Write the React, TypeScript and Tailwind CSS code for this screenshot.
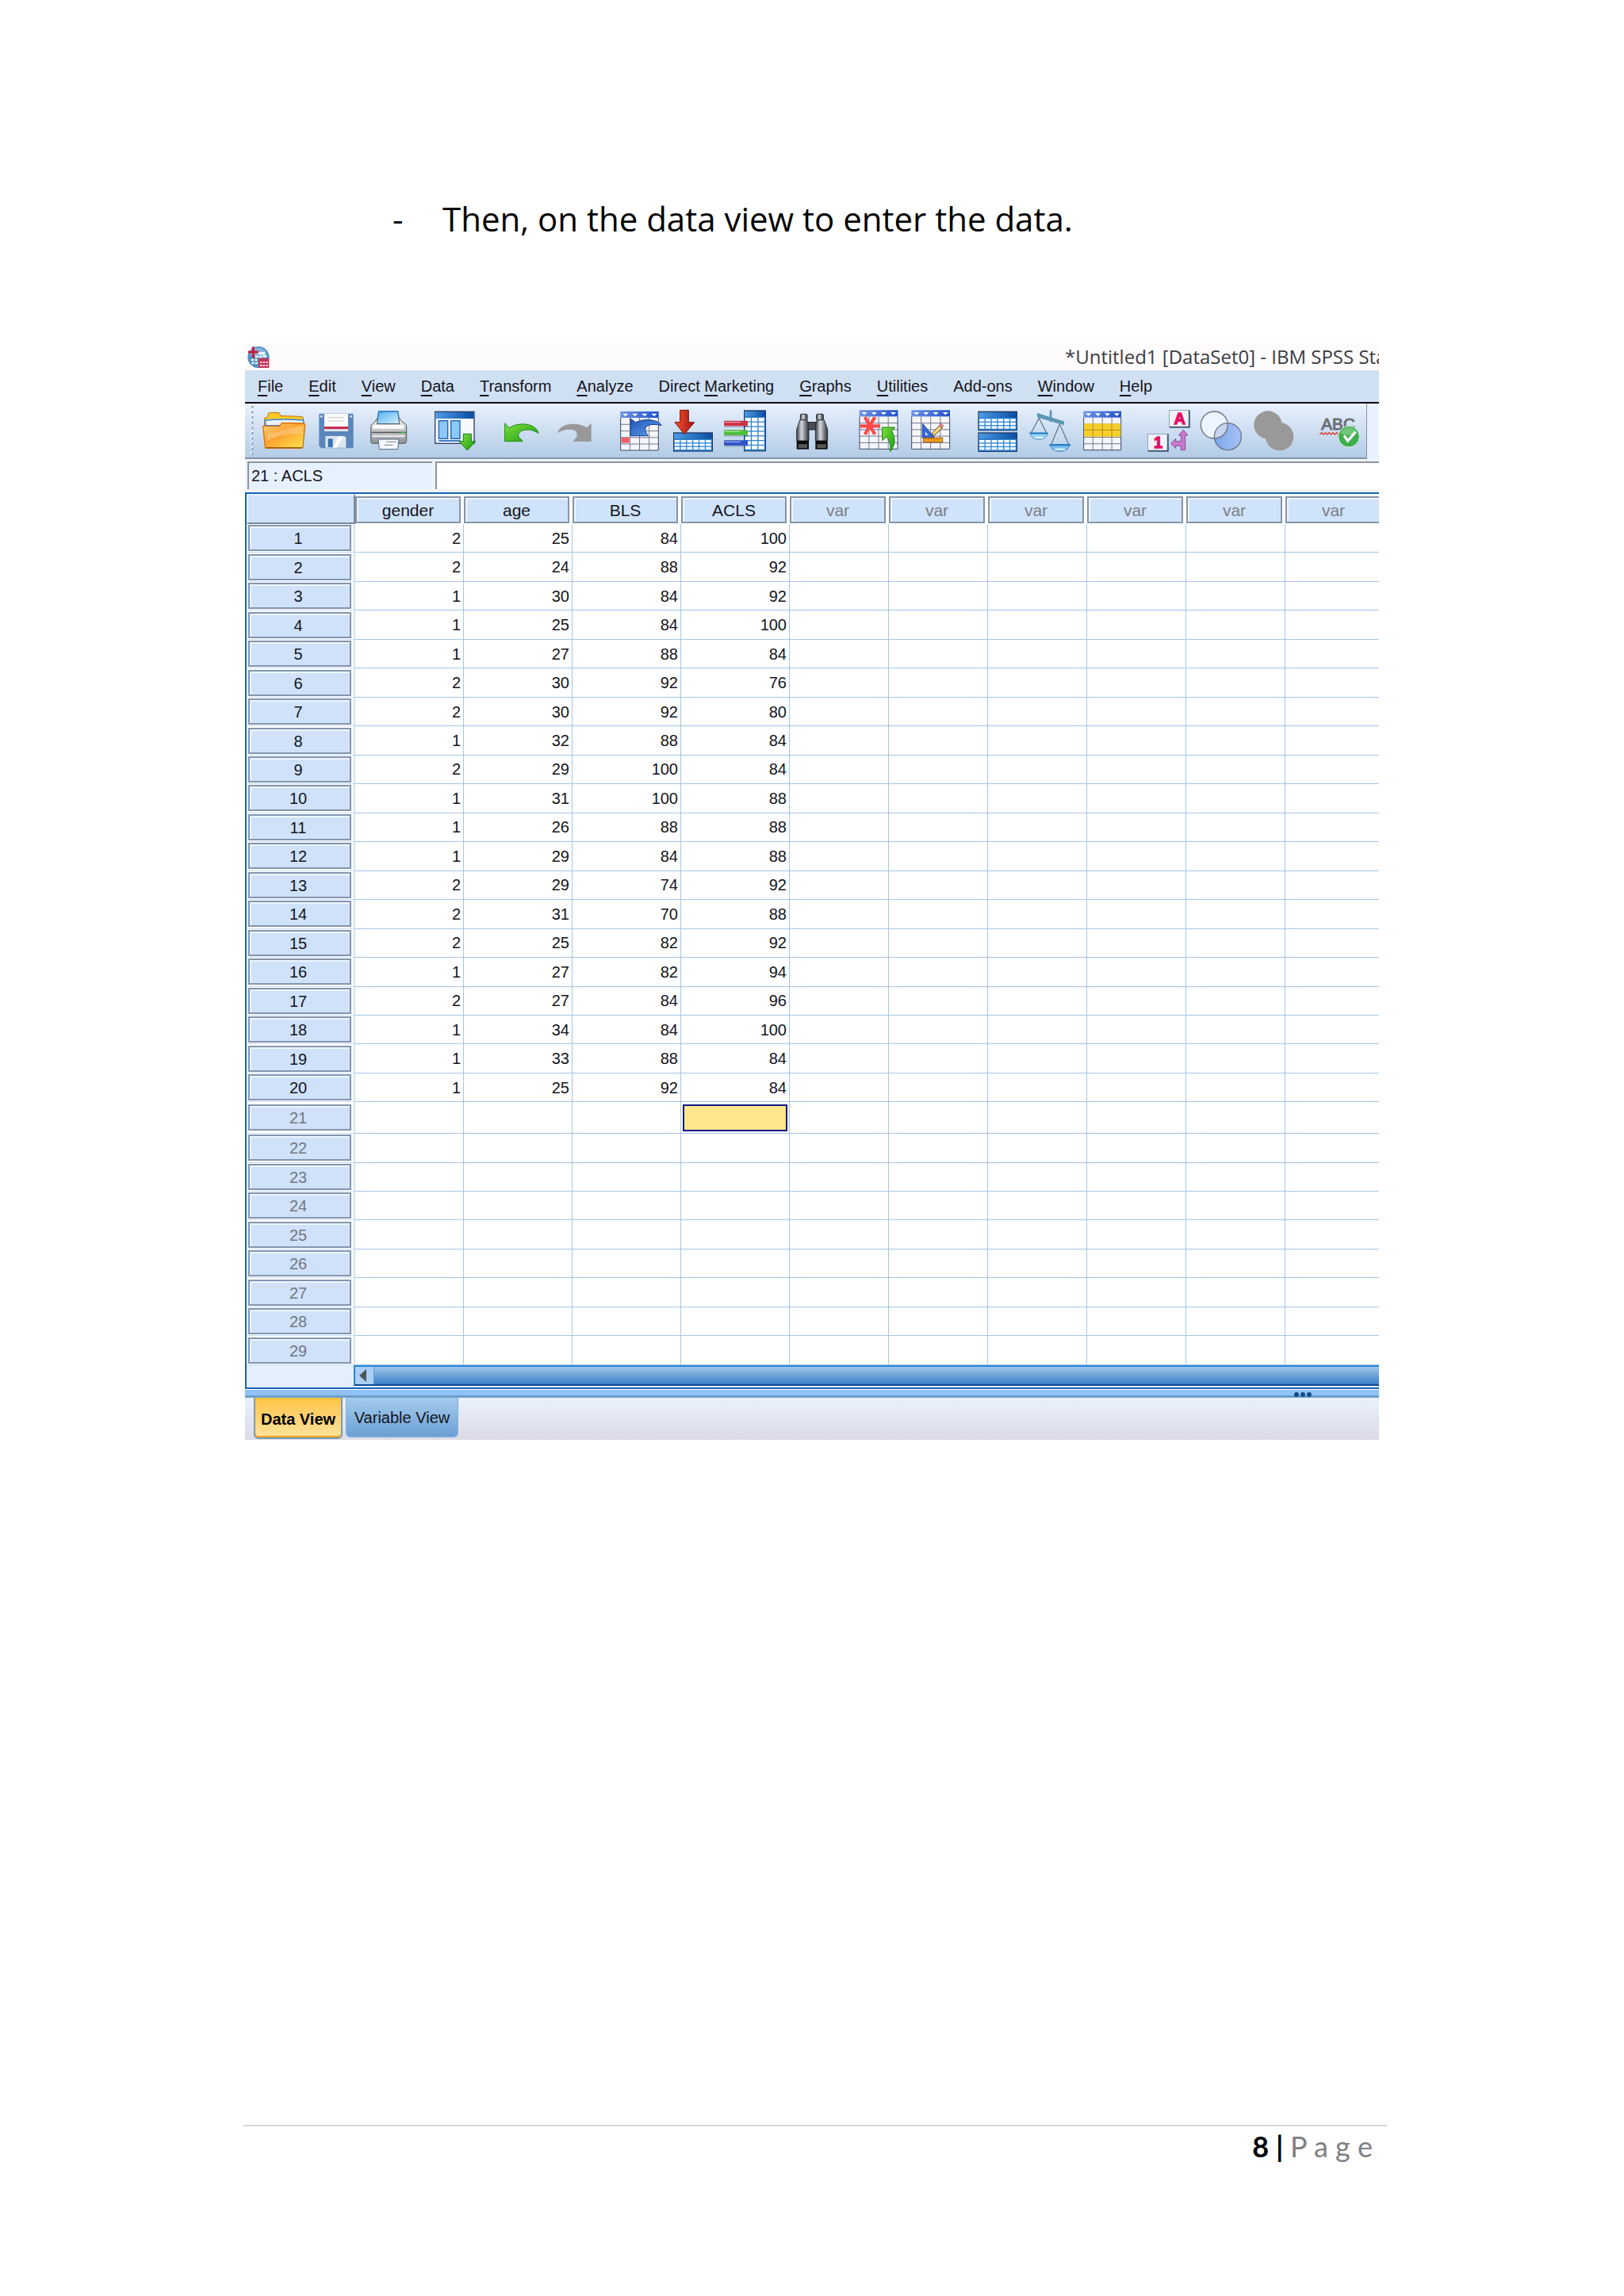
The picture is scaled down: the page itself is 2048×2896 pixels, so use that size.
import React from "react";

const menus: [string, string, string][] = [
  ["", "F", "ile"],
  ["", "E", "dit"],
  ["", "V", "iew"],
  ["", "D", "ata"],
  ["", "T", "ransform"],
  ["", "A", "nalyze"],
  ["Direct ", "M", "arketing"],
  ["", "G", "raphs"],
  ["", "U", "tilities"],
  ["Add-", "o", "ns"],
  ["", "W", "indow"],
  ["", "H", "elp"],
];

const data: number[][] = [
  [2, 25, 84, 100],
  [2, 24, 88, 92],
  [1, 30, 84, 92],
  [1, 25, 84, 100],
  [1, 27, 88, 84],
  [2, 30, 92, 76],
  [2, 30, 92, 80],
  [1, 32, 88, 84],
  [2, 29, 100, 84],
  [1, 31, 100, 88],
  [1, 26, 88, 88],
  [1, 29, 84, 88],
  [2, 29, 74, 92],
  [2, 31, 70, 88],
  [2, 25, 82, 92],
  [1, 27, 82, 94],
  [2, 27, 84, 96],
  [1, 34, 84, 100],
  [1, 33, 88, 84],
  [1, 25, 92, 84],
];

const columns = ["gender", "age", "BLS", "ACLS", "var", "var", "var", "var", "var", "var"];
const rows = Array.from({ length: 29 }, (_, i) => i);

function Tool({ label, box, children }: { label: string; box: string; children: React.ReactNode }) {
  return (
    <button type="button" aria-label={label} className="block size-[54px] shrink-0">
      <svg viewBox={box} className="block size-[54px] overflow-visible" aria-hidden="true">
        {children}
      </svg>
    </button>
  );
}

/* A sheet with a blue caption row of small white triangles. */
function Sheet({ x, y, w, h }: { x: number; y: number; w: number; h: number }) {
  const cw = w / 4;
  const top = 24;
  const rh = (h - top) / 5;
  return (
    <g>
      <rect x={x} y={y} width={w} height={h} fill="#f4f6fc" />
      <rect x={x} y={y} width={w} height={top} fill="url(#cap)" />
      {[0, 1, 2, 3].map((i) => (
        <path key={i} d={`M${x + i * cw + 8} ${y + 8}h${cw - 14}l-${(cw - 14) / 2} 10z`} fill="#fff" />
      ))}
      {[1, 2, 3].map((i) => (
        <path key={i} d={`M${x + i * cw} ${y + top}V${y + h}`} stroke="#77798a" strokeWidth="3" />
      ))}
      {[1, 2, 3, 4].map((i) => (
        <path key={i} d={`M${x} ${y + top + i * rh}h${w}`} stroke="#77798a" strokeWidth="3" />
      ))}
      <path d={`M${x + 1} ${y + top}V${y + h - 1}H${x + w - 1}V${y + top}`} fill="none" stroke="#3b4766" strokeWidth="3" />
    </g>
  );
}

/* A dark framed blue table with white cells. */
function BlueTable({ x, y, w, h, head, nx, ny }: { x: number; y: number; w: number; h: number; head: number; nx: number; ny: number }) {
  const cw = (w - 8) / nx;
  const rh = (h - head - 5) / ny;
  const cells: React.ReactNode[] = [];
  for (let i = 0; i < nx; i++)
    for (let j = 0; j < ny; j++)
      cells.push(<rect key={i + "-" + j} x={x + 5 + i * cw} y={y + head + 1 + j * rh} width={cw - 4} height={rh - 4} fill="#fff" />);
  return (
    <g>
      <rect x={x} y={y} width={w} height={h} fill="#1c3566" />
      <rect x={x + 3} y={y + 4} width={w - 6} height={head - 7} fill="url(#deep)" />
      <rect x={x + 3} y={y + head - 3} width={w - 6} height={h - head} fill="#2d86d2" />
      {cells}
    </g>
  );
}

function Toolbar() {
  return (
    <div className="flex h-[70px] items-stretch bg-[#e8f1fd]">
      <svg width="0" height="0" className="absolute" aria-hidden="true">
        <defs>
          <linearGradient id="cap" x1="0" x2="1">
            <stop offset="0" stopColor="#6f93e8" />
            <stop offset="1" stopColor="#1e50c8" />
          </linearGradient>
          <linearGradient id="deep" x1="0" x2="1">
            <stop offset="0" stopColor="#4f9be4" />
            <stop offset="1" stopColor="#0a4da4" />
          </linearGradient>
          <linearGradient id="folder" x1="0" y1="0" x2="1" y2="1">
            <stop offset="0" stopColor="#ffcf83" />
            <stop offset="0.45" stopColor="#fba22e" />
            <stop offset="1" stopColor="#ffe94e" />
          </linearGradient>
          <linearGradient id="paper" x1="0" y1="0" x2="1" y2="1">
            <stop offset="0" stopColor="#52b0f2" />
            <stop offset="1" stopColor="#d5f0ff" />
          </linearGradient>
          <linearGradient id="printer" x1="0" y1="0" x2="0" y2="1">
            <stop offset="0" stopColor="#f4f4f4" />
            <stop offset="1" stopColor="#8d8f93" />
          </linearGradient>
          <linearGradient id="green" x1="0" y1="0" x2="1" y2="1">
            <stop offset="0" stopColor="#7ee03c" />
            <stop offset="1" stopColor="#1b9a12" />
          </linearGradient>
          <linearGradient id="red" x1="0" x2="1">
            <stop offset="0" stopColor="#f0543a" />
            <stop offset="1" stopColor="#a81208" />
          </linearGradient>
          <linearGradient id="blue" x1="0" y1="0" x2="1" y2="1">
            <stop offset="0" stopColor="#1c50b4" />
            <stop offset="1" stopColor="#64a8f2" />
          </linearGradient>
          <linearGradient id="metal" x1="0" x2="1">
            <stop offset="0" stopColor="#3c3f46" />
            <stop offset="0.4" stopColor="#d4d8df" />
            <stop offset="1" stopColor="#2c2e34" />
          </linearGradient>
          <linearGradient id="lens" x1="0" y1="0" x2="1" y2="0">
            <stop offset="0" stopColor="#7da4ea" />
            <stop offset="1" stopColor="#a5c3f7" />
          </linearGradient>
        </defs>
      </svg>
      <div className="flex min-w-0 items-center gap-[30px] overflow-hidden border-r border-b-2 border-[#8593a8] bg-linear-to-b from-[#e9f1fd] to-[#b3cce6] pr-1.5 pl-0.5">
        <div className="flex items-center gap-3">
          <svg viewBox="0 0 12 66" className="-mr-2 ml-1 h-[66px] w-3 shrink-0" aria-hidden="true">
            {[0, 1, 2, 3, 4, 5, 6, 7, 8, 9].map((i) => (
              <g key={i}>
                <rect x="1" y={1 + i * 6.6} width="3" height="3" fill="#f8fbff" />
                <rect x="2" y={2 + i * 6.6} width="2.4" height="2.4" fill="#8e99a8" />
              </g>
            ))}
          </svg>
          <Tool label="Open data document" box="90 288 162 162">
            <path d="M98 350V322l12-4 3-15q8-3 40-1l6 12q60 0 84 4l4 30z" fill="#ffc928" stroke="#b9740d" strokeWidth="3" />
            <path d="M101 350V330q70-6 144 0v20z" fill="#eef3fb" stroke="#2f86d6" strokeWidth="4" />
            <path d="M92 352l62 0 10-12 84 2q4 2 3 8l-8 82-4 4H104l-4-4z" fill="url(#folder)" stroke="#d4700f" strokeWidth="4" />
            <path d="M108 382q50-8 90-24 30-6 46-4l-4 28q-60-6-130 24z" fill="#ffd9a0" opacity=".45" />
            <path d="M104 434h136" stroke="#8a4a08" strokeWidth="3" />
          </Tool>
          <Tool label="Save this document" box="292 288 162 162">
            <path d="M308 308q0-3 4-3h122q4 0 4 4v122q0 5-5 5H318l-10-8z" fill="#5b86bb" />
            <rect x="328" y="306" width="90" height="48" fill="#fbfbfc" />
            <path d="M342 320h60M342 333h60" stroke="#c9c9cc" strokeWidth="3" />
            <rect x="328" y="354" width="90" height="10" fill="#cb2f50" />
            <rect x="328" y="364" width="90" height="8" fill="#e6e8ee" />
            <path d="M332 434v-38q0-6 6-6h62q10 0 10 8v36z" fill="#dfe5ee" />
            <rect x="342" y="400" width="18" height="32" fill="#3872b4" />
            <path d="M362 434l20-42h16l-24 42z" fill="#fff" />
            <circle cx="317" cy="316" r="4" fill="#e6eefb" />
            <circle cx="429" cy="316" r="4" fill="#e6eefb" />
          </Tool>
          <Tool label="Print" box="488 288 162 162">
            <path d="M524 345l8-48h72l8 48z" fill="url(#paper)" stroke="#1f6cb4" strokeWidth="4" />
            <path d="M520 334q2-8 8-12l-2 22h84l-2-22q8 4 10 12l14 10q5 4 5 12v54q-2 8-8 8H510q-8 0-8-8v-54q0-8 6-12z" fill="url(#printer)" stroke="#55575b" strokeWidth="3" />
            <path d="M510 348h116v14H510z" fill="#fafafa" />
            <path d="M504 376h132" stroke="#4c4e52" strokeWidth="4" />
            <path d="M508 390h122" stroke="#e8e8ea" strokeWidth="8" />
            <path d="M530 402h78l-4 38h-70z" fill="#f4f8ff" stroke="#5c6a82" strokeWidth="3" />
            <path d="M560 412h40M552 424h34" stroke="#85888f" strokeWidth="3" />
            <rect x="618" y="374" width="12" height="6" fill="#42cc4a" />
          </Tool>
        </div>
        <Tool label="Recall recently used dialogs" box="738 288 162 162">
          <rect x="743" y="298" width="148" height="120" fill="#f6faff" stroke="#2a3c6c" strokeWidth="4" />
          <rect x="745" y="300" width="144" height="24" fill="url(#deep)" />
          <rect x="757" y="332" width="34" height="68" fill="#8cc8f8" stroke="#1d5fb4" strokeWidth="4" />
          <rect x="803" y="332" width="34" height="68" fill="#8cc8f8" stroke="#1d5fb4" strokeWidth="4" />
          <path d="M757 408h82" stroke="#1d5fb4" strokeWidth="5" />
          <path d="M850 382h30v28h16l-31 34-31-34h16z" fill="url(#green)" stroke="#16780e" strokeWidth="3" />
        </Tool>
        <div className="flex gap-3">
          <Tool label="Undo" box="987 288 162 162">
            <path d="M1004 342l17 17q26-17 62-14 40 6 49 34-34-20-62-10-18 8-14 24l16 17H1004z" fill="url(#green)" stroke="#1f8a1a" strokeWidth="3" />
          </Tool>
          <Tool label="Redo" box="46 168 162 162">
            <path d="M192 221l-17 17q-26-16-66-13-36 6-46 34 34-20 64-11 14 6 10 24l-14 19h69z" fill="#999" />
          </Tool>
        </div>
        <div className="flex gap-3">
          <Tool label="Go to case" box="303 168 162 162">
            <Sheet x={307} y={177} w={145} h={148} />
            <rect x="311" y="276" width="30" height="20" fill="#f35a68" />
            <path d="M345 204l20 14q30-14 62-8 30 6 35 20-36-10-58 4-8 14 8 35h-67z" fill="url(#blue)" stroke="#123c8c" strokeWidth="3" />
          </Tool>
          <Tool label="Go to variable" box="501 168 162 162">
            <BlueTable x={507} y={256} w={150} h={73} head={28} nx={6} ny={3} />
            <path d="M533 172h32v46h22l-38 45-36-45h20z" fill="url(#red)" stroke="#7c120a" strokeWidth="3" />
          </Tool>
          <Tool label="Variables" box="702 168 162 162">
            <BlueTable x={777} y={172} w={84} h={156} head={28} nx={3} ny={7} />
            <rect x="702" y="212" width="90" height="20" rx="3" fill="#cd3346" />
            <rect x="702" y="247" width="90" height="20" rx="3" fill="#4fbd3c" />
            <rect x="702" y="286" width="90" height="20" rx="3" fill="#3456c8" />
            <path d="M704 218h60M704 253h60M704 292h60" stroke="#fff" strokeWidth="4" opacity=".5" />
            <path d="M704 235h88M704 270h88M704 309h88" stroke="#44506a" strokeWidth="3" opacity=".5" />
          </Tool>
        </div>
        <Tool label="Find" box="951 168 162 162">
          <rect x="1018" y="218" width="28" height="28" fill="#4a4e57" stroke="#1d1f24" strokeWidth="3" />
          <rect x="988" y="187" width="26" height="22" rx="4" fill="url(#metal)" stroke="#24262b" strokeWidth="3" />
          <rect x="1049" y="187" width="26" height="22" rx="4" fill="url(#metal)" stroke="#24262b" strokeWidth="3" />
          <path d="M986 209h28l6 36v43h-46v-43z" fill="url(#metal)" stroke="#2e3138" strokeWidth="3" />
          <path d="M1050 209h28l13 36v43h-46v-43z" fill="url(#metal)" stroke="#2e3138" strokeWidth="3" />
          <rect x="974" y="288" width="46" height="32" fill="#0c0c0e" />
          <rect x="1045" y="288" width="46" height="32" fill="#0c0c0e" />
          <path d="M980 308h34M1051 308h34" stroke="#8c8c88" strokeWidth="14" opacity=".6" />
        </Tool>
        <div className="flex gap-3">
          <Tool label="Insert cases" box="113 288 162 162">
            <Sheet x={121} y={292} w={146} h={148} />
            <path d="M142 318l38 66M180 318l-38 66M124 352h76" stroke="#f94a48" strokeWidth="13" />
            <path d="M207 357h49l-12 14q24 40-6 78 4-36-14-56l-16 14z" fill="url(#green)" stroke="#1c8a16" strokeWidth="3" />
          </Tool>
          <Tool label="Insert variable" box="314 288 162 162">
            <Sheet x={321} y={292} w={146} h={148} />
            <path d="M363 343l46 54h-46z" fill="#3a68d8" stroke="#173b9a" strokeWidth="3" />
            <path d="M374 374l10 12h-10z" fill="#fff" />
            <rect x="367" y="397" width="72" height="16" fill="#f3a21c" stroke="#a55c08" strokeWidth="3" />
            <path d="M376 398v8M386 398v8M396 398v8M406 398v8M416 398v8M426 398v8" stroke="#a55c08" strokeWidth="2" />
            <path d="M398 390l4-14 26-26 10 10-26 24z" fill="#f5d77a" stroke="#4a3a1c" strokeWidth="3" />
            <path d="M426 350l7-8 9 9-7 9z" fill="#f08a8a" stroke="#8c3030" strokeWidth="2" />
          </Tool>
        </div>
        <div className="flex gap-3">
          <Tool label="Split file" box="570 288 162 162">
            <BlueTable x={577} y={296} w={149} h={74} head={28} nx={6} ny={3} />
            <BlueTable x={577} y={376} w={149} h={74} head={28} nx={6} ny={3} />
          </Tool>
          <Tool label="Weight cases" box="768 288 162 162">
            <path d="M803 306l98 30v10l-98-28z" fill="#5b9ab8" stroke="#5b95b0" strokeWidth="4" />
            <path d="M852 292v44" stroke="#5b95b0" strokeWidth="8" />
            <path d="M808 322l-30 56M808 322l28 56M886 344l-32 78M886 344l34 78" stroke="#6b7f90" strokeWidth="4" fill="none" />
            <path d="M772 378h70q-8 24-34 25-28-1-36-25z" fill="#9cd4f4" stroke="#4e8fc0" strokeWidth="3" />
            <path d="M847 422h80q-10 25-40 26-30-1-40-26z" fill="#7cc0f0" stroke="#3f84bc" strokeWidth="3" />
            <path d="M774 380h66M850 424h74" stroke="#1e78c0" strokeWidth="5" />
            <path d="M792 396h32M868 440h38" stroke="#eaf7ff" strokeWidth="6" />
          </Tool>
          <Tool label="Select cases" box="963 288 162 162">
            <Sheet x={973} y={296} w={143} h={148} />
            <rect x="975" y="343" width="139" height="49" fill="#f6cf28" />
            <path d="M973 367h143M1009 343v49M1045 343v49M1080 343v49" stroke="#b08a2c" strokeWidth="3" />
          </Tool>
        </div>
        <div className="flex gap-3">
          <Tool label="Value labels" box="201 288 162 162">
            <rect x="284" y="292" width="78" height="67" fill="#2e3f5e" />
            <rect x="284" y="292" width="73" height="62" fill="#eef3fa" stroke="#8696ae" strokeWidth="2" />
            <text x="323" y="345" textAnchor="middle" fontFamily="Liberation Sans" fontWeight="700" fontSize="60" fill="#e80f62" stroke="#e80f62" strokeWidth="4">A</text>
            <rect x="203" y="382" width="78" height="67" fill="#2e3f5e" />
            <rect x="203" y="382" width="73" height="62" fill="#eef3fa" stroke="#8696ae" strokeWidth="2" />
            <text x="242" y="435" textAnchor="middle" fontFamily="Liberation Sans" fontWeight="700" fontSize="60" fill="#e80f62" stroke="#e80f62" strokeWidth="4">1</text>
            <path d="M337 367l17 20h-10v56h-16v-16h-20v9l-18-18 18-18v10h20v-23h-9z" fill="#c878cc" stroke="#8d4a9a" strokeWidth="3" />
          </Tool>
          <Tool label="Use variable sets" box="399 288 162 162">
            <circle cx="454" cy="348" r="51" fill="#edf4fd" />
            <circle cx="505" cy="392" r="51" fill="url(#lens)" />
            <path d="M455 385a51 51 0 0 1 50-44a51 51 0 0 1-50 58z" fill="#c5d5ee" />
            <circle cx="454" cy="348" r="51" fill="none" stroke="#6d7681" strokeWidth="4" />
            <circle cx="505" cy="392" r="51" fill="none" stroke="#6d7681" strokeWidth="4" />
          </Tool>
          <Tool label="Show all variables" box="600 288 162 162">
            <circle cx="660" cy="348" r="53" fill="#999" />
            <circle cx="704" cy="392" r="53" fill="#999" />
          </Tool>
        </div>
        <Tool label="Spell check" box="852 288 162 162">
          <text x="862" y="366" fontFamily="Liberation Sans" fontWeight="400" fontSize="62" fill="#6a6d73" stroke="#6a6d73" strokeWidth="3">ABC</text>
          <path d="M856 384l7-7 7 7 7-7 7 7 7-7 7 7 7-7 7 7 7-7 7 7" fill="none" stroke="#d8402c" strokeWidth="4" />
          <circle cx="966" cy="392" r="40" fill="#3fae4d" stroke="#d9f0dd" strokeWidth="3" />
          <path d="M934 380a34 34 0 0 1 64 0q-32 14-64 0z" fill="#8ed696" opacity=".6" />
          <path d="M948 388l14 20 30-34" fill="none" stroke="#fff" strokeWidth="10" />
        </Tool>
      </div>
    </div>
  );
}

function AppIcon() {
  return (
    <svg viewBox="36 42 84 84" className="size-7 shrink-0" aria-hidden="true">
      <circle cx="78" cy="86" r="41" fill="#5590c4" />
      <path d="M50 60q26-20 54 0l8 22H48z" fill="#86b6dc" />
      <path d="M76 66h26v10H76zM66 80h11v8H66zM80 80h11v8H80zM94 78h14v8H94zM50 92h10v8H50zM64 92h10v8H64zM52 104h9v8h-9zM65 104h9v8h-9z" fill="#eef6fd" />
      <path d="M58 46v42M39 66h38" stroke="#c41e3c" strokeWidth="9" />
      <rect x="78" y="90" width="40" height="36" fill="#c83258" />
      <path d="M84 102h7v6h-7zM95 102h7v6h-7zM106 102h7v6h-7zM84 114h7v6h-7zM95 114h7v6h-7zM106 114h7v6h-7z" fill="#fbe3ea" />
    </svg>
  );
}

function Grid() {
  return (
    <div className="overflow-hidden border-l-2 border-t-2 border-b-2 border-[#1764b4] bg-white">
      <table className="h-[1099px] w-[1435px] table-fixed border-separate border-spacing-0 text-xl leading-6">
        <colgroup>
          <col className="w-[137px]" />
          {columns.map((_, i) => (
            <col key={i} className={i < 4 ? "w-[137px]" : "w-[125px]"} />
          ))}
        </colgroup>
        <thead>
          <tr className="h-[38px]">
            <td className="h-[38px] bg-[#cfe2fa] p-0">
              <div className="h-[38px] border-2 border-[#7c8798] border-t-[#eaf3ff] border-l-[#eaf3ff]" />
            </td>
            {columns.map((c, i) => (
              <th key={i} scope="col" className="h-[38px] p-0 pt-[3px] pr-1 pb-px align-top font-normal">
                <div
                  className={
                    "h-[34px] border-2 border-[#8794a8] bg-[#cfe3fa] text-[21px] leading-8 inset-shadow-[2px_2px_0_#edf5ff] " +
                    (i < 4 ? "text-[#15151c]" : "text-[#7b7e86]")
                  }
                >
                  {c}
                </div>
              </th>
            ))}
          </tr>
        </thead>
        <tbody>
          {rows.map((r) => (
            <tr key={r}>
              <th scope="row" className="border-r-2 border-b border-r-[#d3e0f5] border-b-[#cbdcf0] bg-white p-0 pr-[3px] pl-0.5 font-normal">
                <div
                  className={
                    "h-[33px] border-2 border-[#8395b0] bg-[#cfe2fa] pr-1 leading-[30px] inset-shadow-[2px_2px_0_#edf5ff] " +
                    (r < 20 ? "text-[#15151c]" : "text-[#74777f]")
                  }
                >
                  {r + 1}
                </div>
              </th>
              {columns.map((_, c) => (
                <td
                  key={c}
                  className={
                    "border-r border-b border-[#a3c5e8] text-right text-[#15151c] " +
                    (r === 20 && c === 3 ? "px-0.5 py-px" : "py-0 pr-[3px] pl-0")
                  }
                >
                  {r === 20 && c === 3 ? <div className="h-[34px] border-2 border-[#16168a] bg-[#fde68c]" /> : (data[r]?.[c] ?? "")}
                </td>
              ))}
            </tr>
          ))}
        </tbody>
      </table>
      <div className="flex h-7 bg-[#e4effe] pb-0.5">
        <div className="w-[135px] shrink-0" />
        <div className="flex flex-1 border-2 border-r-0 border-[#2a86dc] border-b-[#0d4a94] bg-linear-to-b from-[#9fc6e8] to-[#3a7fc8]">
          <button type="button" aria-label="Scroll left" className="flex w-6 items-center justify-center border-r border-[#5d9ddc] bg-[#abcef4] pr-1">
            <svg viewBox="0 0 10 16" className="h-4 w-2.5" aria-hidden="true">
              <path d="M9 0v16L0 8z" fill="#4c5560" />
            </svg>
          </button>
        </div>
      </div>
    </div>
  );
}

export default function App() {
  return (
    <div className="flex min-h-screen flex-col bg-white px-[309px] font-['Liberation_Sans',sans-serif]">
      <p className="mt-[244px] flex h-16 items-center pl-[186px] font-['Open_Sans','Noto_Sans',sans-serif] text-[42px] leading-[64px] text-black">
        <span className="w-[63px]">-</span>
        <span className="whitespace-nowrap">Then, on the data view to enter the data.</span>
      </p>

      <main className="mt-[125px] overflow-hidden text-xl text-[#15151c]">
        <header className="flex h-[34px] items-center justify-between bg-[#fdfbfc] pl-[3px]">
          <AppIcon />
          <h1 className="w-[396px] overflow-hidden whitespace-nowrap font-['Open_Sans','Noto_Sans',sans-serif] text-2xl leading-[34px] text-[#3c3c42]">
            *Untitled1 [DataSet0] - IBM SPSS Sta
          </h1>
        </header>

        <nav aria-label="Main menu" className="flex h-[42px] items-center gap-8 border-b-2 border-[#0c0c14] bg-[#d0e0f3] pl-4">
          {menus.map(([a, b, c]) => (
            <button key={b + c} type="button" className="shrink-0 whitespace-pre leading-6">
              {a}
              <span className="underline decoration-2 underline-offset-4">{b}</span>
              {c}
            </button>
          ))}
        </nav>

        <Toolbar />

        <div className="flex h-[42px] gap-1 bg-[#eef4fd] pt-[3px] pb-1 pl-[3px]">
          <input
            aria-label="Active cell"
            readOnly
            value="21 : ACLS"
            className="h-[35px] w-[233px] border-t-2 border-l-2 border-[#8f939c] bg-[#e6f1ff] pl-[3px] outline-none"
          />
          <input
            aria-label="Cell value"
            className="h-[35px] min-w-0 flex-1 border-t-2 border-l-2 border-[#8f939c] bg-white outline-none"
          />
        </div>

        <Grid />

        <div className="flex h-[11px] justify-end border-t border-b-[3px] border-t-white border-b-[#6c9fcd] bg-[#90c2f6] pr-[84px]">
          <svg viewBox="0 0 24 8" className="mt-0.5 h-2 w-6" aria-hidden="true">
            <circle cx="4" cy="4" r="3" fill="#164c86" />
            <circle cx="12" cy="4" r="3" fill="#164c86" />
            <circle cx="20" cy="4" r="3" fill="#164c86" />
          </svg>
        </div>

        <div role="tablist" className="flex h-[53px] items-start gap-1 bg-linear-to-b from-[#e9f1fd] to-[#dbdbe7] pl-[11px]">
          <button
            role="tab"
            type="button"
            aria-selected="true"
            className="h-[52px] w-28 rounded-b-md border-2 border-t-0 border-[#7a9cae] bg-linear-to-b from-[#fec33f] to-[#fee29a] pt-1 font-bold text-black shadow-[inset_0_-2px_0_#f0a428]"
          >
            Data View
          </button>
          <button
            role="tab"
            type="button"
            aria-selected="false"
            className="h-[50px] w-[142px] rounded-b-md border border-t-0 border-[#7fb0dc] bg-linear-to-b from-[#a5cbea] to-[#6ba0d6]"
          >
            Variable View
          </button>
        </div>
      </main>

      <footer className="mt-auto mb-[164px] -mr-2.5 -ml-0.5 border-t-2 border-[#d5d6d9] pr-[18px] text-right font-['Lato',sans-serif] text-4xl leading-[50px] text-black">
        <span className="font-bold">8 | </span>
        <span className="text-[#808083]">P a g e</span>
      </footer>
    </div>
  );
}
